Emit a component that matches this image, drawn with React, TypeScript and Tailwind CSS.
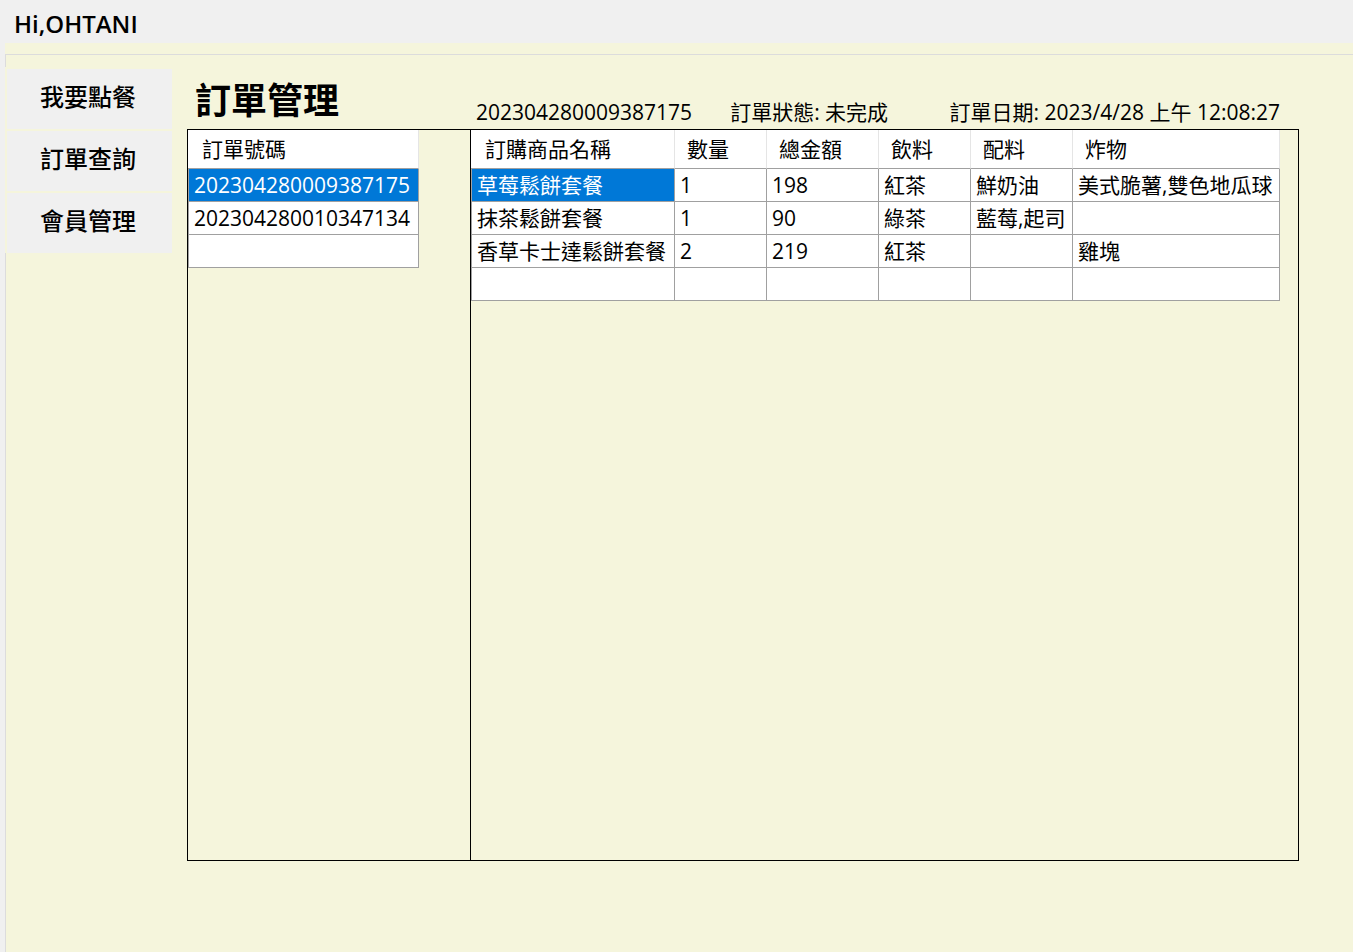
import { useState } from 'react';
import clsx from 'clsx';

const menuItems = ['我要點餐', '訂單查詢', '會員管理'];

const orders = ['202304280009387175', '202304280010347134'];

const columns = [
  { name: '訂購商品名稱', width: 'w-[204px]' },
  { name: '數量', width: 'w-[92px]' },
  { name: '總金額', width: 'w-[112px]' },
  { name: '飲料', width: 'w-[92px]' },
  { name: '配料', width: 'w-[102px]' },
  { name: '炸物', width: 'w-[207px]' },
];

const items = [
  ['草莓鬆餅套餐', '1', '198', '紅茶', '鮮奶油', '美式脆薯,雙色地瓜球'],
  ['抹茶鬆餅套餐', '1', '90', '綠茶', '藍莓,起司', ''],
  ['香草卡士達鬆餅套餐', '2', '219', '紅茶', '', '雞塊'],
  ['', '', '', '', '', ''],
];

const tableClass = 'table-fixed border-separate border-spacing-0 bg-white text-[21px] leading-6 whitespace-nowrap';
const headClass = 'h-[39px] border-r border-b border-r-[#e5e5e5] border-b-[#a0a0a0] py-0 pr-0 pl-3 text-left font-normal first:pl-[14px]';
const cellClass = 'h-[33px] border-r border-b border-[#a0a0a0] p-0 pl-[5px] first:border-l';

export default function App() {
  const [selectedOrder, setSelectedOrder] = useState(orders[0]);

  return (
    <div className="flex min-h-screen flex-col bg-[#f0f0f0] font-['Open_Sans','Noto_Sans_CJK_TC',sans-serif] text-black">
      <header className="h-[43px] px-[14px] pt-2 text-2xl leading-8 font-semibold">Hi,OHTANI</header>

      <div className="ml-[5px] flex flex-1 flex-col bg-[#f5f5dc] pt-[11px]">
        <div className="flex flex-1 border-t border-l border-[#dcdcdc]">
          <nav className="-ml-px mt-3 flex w-[167px] shrink-0 flex-col gap-0.5 self-start bg-[#f5f5dc] pt-0.5 pl-0.5">
            {menuItems.map((item) => (
              <button key={item} type="button" className="h-[60px] bg-[#f0f0f0] pr-[3px] pb-1 text-2xl font-medium">
                {item}
              </button>
            ))}
          </nav>

          <main className="mr-[54px] mb-[91px] ml-[15px] flex flex-1 flex-col">
            <div className="flex h-[74px] whitespace-nowrap">
              <h1 className="w-[284px] shrink-0 pt-5 pl-2 text-4xl leading-[52px] font-bold">訂單管理</h1>
              <div className="flex flex-1 items-end pr-[19px] pb-[3px] pl-[5px] text-[21px] leading-[28px]">
                <span>{selectedOrder}</span>
                <span className="ml-[38px]">訂單狀態: 未完成</span>
                <span className="ml-auto">訂單日期: 2023/4/28 上午 12:08:27</span>
              </div>
            </div>

            <div className="flex flex-1 border border-black">
              <section className="w-[282px] shrink-0">
                <table className={tableClass}>
                  <thead>
                    <tr>
                      <th className={clsx(headClass, 'w-[231px]')}>訂單號碼</th>
                    </tr>
                  </thead>
                  <tbody>
                    {orders.map((order) => (
                      <tr key={order} onClick={() => setSelectedOrder(order)}>
                        <td className={clsx(cellClass, order === selectedOrder && 'bg-[#0078d7] text-white')}>{order}</td>
                      </tr>
                    ))}
                    <tr>
                      <td className={cellClass}></td>
                    </tr>
                  </tbody>
                </table>
              </section>

              <section className="flex-1 border-l border-black">
                <table className={tableClass}>
                  <thead>
                    <tr>
                      {columns.map((col) => (
                        <th key={col.name} className={clsx(headClass, col.width)}>{col.name}</th>
                      ))}
                    </tr>
                  </thead>
                  <tbody>
                    {items.map((row, i) => (
                      <tr key={i}>
                        {row.map((value, j) => (
                          <td key={j} className={clsx(cellClass, i === 0 && j === 0 && 'bg-[#0078d7] text-white')}>
                            {value}
                          </td>
                        ))}
                      </tr>
                    ))}
                  </tbody>
                </table>
              </section>
            </div>
          </main>
        </div>
      </div>
    </div>
  );
}
